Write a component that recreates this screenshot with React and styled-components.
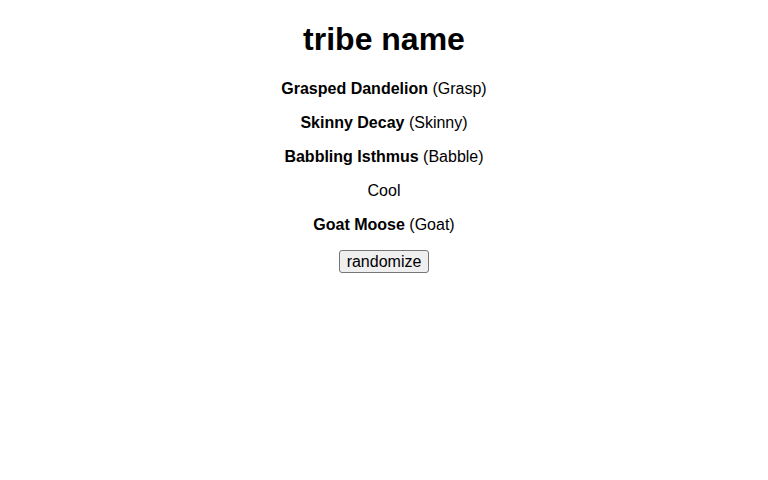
import React from 'react';
import { styled, createGlobalStyle } from 'styled-components';

const GlobalStyle = createGlobalStyle`
	body {
		margin: 0 8px;
		background: #fff;
		color: #000;
		font-family: 'Liberation Sans', Arial, sans-serif;
	}
`;

const Page = styled.main`
	text-align: center;
`;

const Title = styled.h1`
	font-size: 32px;
	font-weight: bold;
	margin: 21.44px 0;
`;

const Line = styled.p`
	font-size: 16px;
	margin: 16px 0;
`;

const Name = styled.strong`
	font-weight: bold;
`;

const Button = styled.button`
	font-family: 'Liberation Sans', Arial, sans-serif;
	font-size: 16px;
	line-height: 19px;
	color: #000;
	background-color: #efefef;
	border: 1px solid #767676;
	border-radius: 3px;
	padding: 1px 7px;
	cursor: pointer;
`;

const tribes = [
	{ name: 'Grasped Dandelion', short: 'Grasp' },
	{ name: 'Skinny Decay', short: 'Skinny' },
	{ name: 'Babbling Isthmus', short: 'Babble' },
	{ plain: 'Cool' },
	{ name: 'Goat Moose', short: 'Goat' },
];

const App = () => {
	return (
		<Page>
			<GlobalStyle />
			<Title>tribe name</Title>
			{tribes.map((t, i) =>
				t.plain ? (
					<Line key={i}>{t.plain}</Line>
				) : (
					<Line key={i}>
						<Name>{t.name}</Name> ({t.short})
					</Line>
				)
			)}
			<Button>randomize</Button>
		</Page>
	);
};

export default App;
